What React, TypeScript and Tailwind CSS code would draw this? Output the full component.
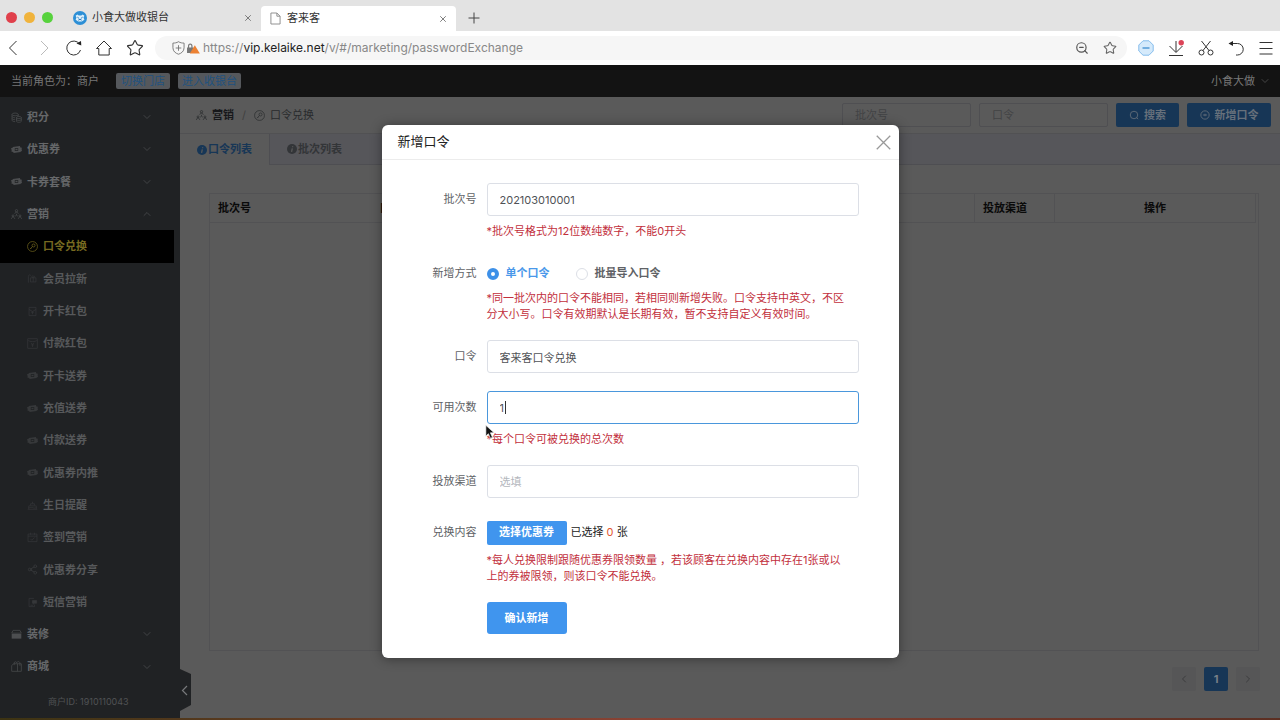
import type { ReactNode } from "react";
import { ChevronDown, ChevronLeft, ChevronRight, ChevronUp, Share2, Star, X, ZoomOut } from "lucide-react";

type IconProps = { className?: string };

function CoinsIcon({ className }: IconProps) {
  return (
    <svg viewBox="0 0 16 16" fill="none" stroke="currentColor" className={className}>
      <ellipse cx="6" cy="3.5" rx="4.5" ry="2" />
      <path d="M1.5 3.5v8.5c0 1 2 2 4.500 2M10.500 3.500V6M1.500 6.500c0 1 2 2 4.500 2M1.500 9.500c0 1 2 1.700 4.500 1.700" />
      <ellipse cx="11.500" cy="8" rx="3.500" ry="1.500" />
      <path d="M8 8v5.500c0 .8 1.500 1.500 3.500 1.500s3.500-.7 3.500-1.500V8M8 10.700c0 .8 1.500 1.500 3.500 1.500s3.500-.7 3.500-1.500" />
    </svg>
  );
}

function TicketIcon({ className }: IconProps) {
  return (
    <svg viewBox="0 0 16 16" fill="currentColor" className={className}>
      <path fillRule="evenodd" d="M0 6l2.500-.5V4.500L13 3l.6 2 2.400.5-.6 1.700.6 3-2 .6v1L4 13l-1-1.500L.5 11l.5-2zM5.500 6.300v4l5-.5v-4z" />
      <path d="M6.500 7.200l3-.3v2l-3 .3z" />
    </svg>
  );
}

function TeamIcon({ className }: IconProps) {
  return (
    <svg viewBox="0 0 16 16" fill="none" stroke="currentColor" className={className}>
      <circle cx="8" cy="2.500" r="1.700" />
      <path d="M5.500 7C5.700 5.500 6.700 4.500 8 4.500s2.300 1 2.500 2.500M8 7v2l-2 1.500M8 9l2 1.500" />
      <circle cx="3" cy="10" r="1.400" />
      <circle cx="13" cy="10" r="1.400" />
      <path d="M.6 14.500c.2-1.800 1.100-2.900 2.400-2.900s2.200 1.100 2.400 2.900M10.600 14.500c.2-1.800 1.100-2.900 2.400-2.900s2.200 1.100 2.400 2.900" />
    </svg>
  );
}

function KeyIcon({ className }: IconProps) {
  return (
    <svg viewBox="0 0 16 16" fill="none" stroke="currentColor" className={className}>
      <circle cx="8" cy="8" r="7.200" />
      <circle cx="9.500" cy="6.500" r="2.200" />
      <path d="M8 8l-3.500 3.500M5.500 10.500l1 1" />
    </svg>
  );
}

function GiftIcon({ className }: IconProps) {
  return (
    <svg viewBox="0 0 16 16" fill="none" stroke="currentColor" className={className}>
      <path d="M2 14V5c0-2 2-3 3.500-1.500M5 7h8v6H5zM9 7v6M9 7c-3-1-2-4 0-2 2-2 3 1 0 2" />
    </svg>
  );
}

function PacketIcon({ className }: IconProps) {
  return (
    <svg viewBox="0 0 16 16" fill="none" stroke="currentColor" className={className}>
      <path d="M3 2h10v12H3zM3 5l5 3 5-3M6 9h4M8 8v4" />
    </svg>
  );
}

function YuanIcon({ className }: IconProps) {
  return (
    <svg viewBox="0 0 16 16" fill="none" stroke="currentColor" className={className}>
      <path d="M1 1h14v14H1zM1 3c3 3 11 3 14 0M6 7l2 2.500L10 7M8 9.500V13M6 10h4" />
    </svg>
  );
}

function CakeIcon({ className }: IconProps) {
  return (
    <svg viewBox="0 0 16 16" fill="none" stroke="currentColor" className={className}>
      <path d="M1 13.500h14M2.500 13V8.500h11V13M5 8V5.500h6V8M8 5V2.500M2.500 11c2 1 3-1 5.500 0s3.500 1 5.500 0" />
    </svg>
  );
}

function CalendarIcon({ className }: IconProps) {
  return (
    <svg viewBox="0 0 16 16" fill="none" stroke="currentColor" className={className}>
      <path d="M1.500 3h13v11h-13zM1.500 6h13M5 1v3M11 1v3M5 10l2 2 4-4" />
    </svg>
  );
}

function SmsIcon({ className }: IconProps) {
  return (
    <svg viewBox="0 0 16 16" fill="none" stroke="currentColor" className={className}>
      <path d="M10 2H3v12h8v-3M5 12h4" />
      <path d="M8 5h6v4h-3l-2 1.500V9H8z" fill="currentColor" />
    </svg>
  );
}

function ShopIcon({ className }: IconProps) {
  return (
    <svg viewBox="0 0 16 16" className={className}>
      <path d="M3 2h10l2 4H1z" fill="none" stroke="currentColor" />
      <path d="M1 7h14v7H1z" fill="currentColor" />
    </svg>
  );
}

function BagIcon({ className }: IconProps) {
  return (
    <svg viewBox="0 0 16 16" fill="none" stroke="currentColor" className={className}>
      <path d="M1 6.500L4 4h11v11H1zM9.500 4v11M4.500 6V3c0-2.500 4-2.500 4 0M9 1.500c2.500-1.500 4 0 4 2V7" />
    </svg>
  );
}

function InfoIcon({ className }: IconProps) {
  return (
    <svg viewBox="0 0 16 16" className={className}>
      <circle cx="8" cy="8" r="8" fill="currentColor" />
      <path d="M9 3.500v1.500M8.500 7L7.300 12.500" stroke="#5a5a5a" strokeWidth="2" />
    </svg>
  );
}

const topMenu = [
  { label: "积分", icon: CoinsIcon, open: false },
  { label: "优惠券", icon: TicketIcon, open: false },
  { label: "卡券套餐", icon: TicketIcon, open: false },
  { label: "营销", icon: TeamIcon, open: true },
];

const subMenu = [
  { label: "口令兑换", icon: KeyIcon, active: true },
  { label: "会员拉新", icon: GiftIcon },
  { label: "开卡红包", icon: PacketIcon },
  { label: "付款红包", icon: YuanIcon },
  { label: "开卡送券", icon: TicketIcon },
  { label: "充值送券", icon: TicketIcon },
  { label: "付款送券", icon: TicketIcon },
  { label: "优惠券内推", icon: TicketIcon },
  { label: "生日提醒", icon: CakeIcon },
  { label: "签到营销", icon: CalendarIcon },
  { label: "优惠券分享", icon: Share2 },
  { label: "短信营销", icon: SmsIcon },
];

const bottomMenu = [
  { label: "装修", icon: ShopIcon, open: false },
  { label: "商城", icon: BagIcon, open: false },
];

function MenuGroup({ items }: { items: typeof topMenu }) {
  return items.map(({ label, icon: Icon, open }) => (
    <button key={label} className="flex flex-1 items-center pl-[11px] pr-[27px] font-bold text-[#66686a]">
      <Icon className="mr-[5px] size-[11px] text-[#4c4e50]" />
      {label}
      {open ? (
        <ChevronUp strokeWidth={1.500} className="ml-auto size-3 text-[#4c4e50]" />
      ) : (
        <ChevronDown strokeWidth={1.500} className="ml-auto size-3 text-[#4c4e50]" />
      )}
    </button>
  ));
}

function BrowserChrome() {
  return (
    <div className="shrink-0 bg-white text-[#333]">
      <div className="flex h-[31px] items-end bg-[#e3e3e3]">
        <div className="flex h-[27px] w-[67px] items-center gap-[7px] pl-[6px]">
          <span className="size-[11px] rounded-full bg-[#e0404b]" />
          <span className="size-[11px] rounded-full bg-[#f0b33c]" />
          <span className="size-[11px] rounded-full bg-[#57d23d]" />
        </div>
        <div className="flex h-[27px] w-[194px] items-center pl-[6px] pr-2">
          <svg viewBox="0 0 16 16" className="mr-[5px] size-[14px]">
            <circle cx="8" cy="8" r="8" fill="#2d8fd6" />
            <path d="M3 5.500L5 4l1.500 1h3L11 4l2 1.500-1 2 1 2.500-3 2H6l-3-2 1-2.500z" fill="#dff1fb" />
            <path d="M5 7l2 1.500M11 7L9 8.500M6 10.500l2-1 2 1M8 9v1" stroke="#1a6fb8" fill="none" />
          </svg>
          <span className="text-[11px]">小食大做收银台</span>
          <X className="ml-auto size-[10px] text-[#666]" />
        </div>
        <div className="flex h-[25px] w-[195px] items-center rounded-t-[4px] bg-white pl-[9px] pr-2">
          <svg viewBox="0 0 12 14" fill="none" stroke="#888" className="mr-[6px] h-[13px] w-[11px]">
            <path d="M1 1h6.500L11 4.500V13H1zM7.500 1v3.500H11" />
          </svg>
          <span className="text-[11px]">客来客</span>
          <X className="ml-auto size-[10px] text-[#666]" />
        </div>
        <svg viewBox="0 0 12 12" stroke="#444" className="mb-[7px] ml-[12px] size-[12px]">
          <path d="M6 .5v11M.5 6h11" />
        </svg>
      </div>
      <div className="flex h-[34px] items-center px-[6px]">
        <div className="flex items-center gap-[14px]">
          <svg viewBox="0 0 16 16" fill="none" stroke="#333" className="size-4">
            <path d="M10.500 1L3.500 8l7 7" />
          </svg>
          <svg viewBox="0 0 16 16" fill="none" stroke="#bbb" className="size-4">
            <path d="M5 1l7 7-7 7" />
          </svg>
          <svg viewBox="0 0 16 16" fill="none" stroke="#333" className="size-4">
            <path d="M13.500 4A7 7 0 1 0 14.500 10" />
            <path d="M10.500 3.500L15 1l.3 4.500z" fill="#222" stroke="none" />
          </svg>
          <svg viewBox="0 0 16 16" fill="none" stroke="#333" className="size-4">
            <path d="M.5 8.500L8 1l7.500 7.500h-2.300V15H2.800V8.500z" />
          </svg>
          <Star strokeWidth={1.500} className="size-[18px] text-[#333]" />
        </div>
        <div className="mx-[11px] flex h-6 flex-1 items-center rounded-full bg-[#f6f6f6] pl-[17px] pr-[10px]">
          <svg viewBox="0 0 14 15" fill="none" stroke="#777" className="h-[14px] w-[13px]">
            <path d="M7 .7c2 1.300 4 1.500 6 1.500v5c0 4-3 6-6 7-3-1-6-3-6-7v-5c2 0 4-.2 6-1.500zM7 4.500v6M4 7.500h6" />
          </svg>
          <svg viewBox="0 0 15 12" className="ml-px mr-[3px] h-[11px] w-[14px]">
            <path d="M1 5h1V3.500C2 1.500 3 .5 4.500.5S7 1.500 7 3.500V5h1v6H1zM3.300 5h2.400V3.500c0-2-2.400-2-2.400 0z" fill="#777" />
            <path d="M9.500 2.500L15 11.500H4z" fill="#ec8133" />
          </svg>
          <span className="text-[12px] text-[#888]">
            https://<span className="text-[#222]">vip.kelaike.net</span>/v/#/marketing/passwordExchange
          </span>
          <ZoomOut strokeWidth={2} className="ml-auto size-[14px] text-[#555]" />
          <Star strokeWidth={1.800} className="ml-[14px] size-[14px] text-[#666]" />
        </div>
        <div className="flex items-center gap-[14px] text-[#333]">
          <svg viewBox="0 0 16 16" className="size-4">
            <path d="M5 .8h6L15.200 5v6L11 15.200H5L.8 11V5z" fill="#d5eafb" stroke="#86bdec" />
            <path d="M4.500 8h7" stroke="#3f8dd0" strokeWidth="1.300" />
          </svg>
          <svg viewBox="0 0 16 16" fill="none" stroke="currentColor" className="size-4">
            <path d="M8 1v11M1.500 6L8 12.500 14.500 6M1 15.500h14" />
            <circle cx="13.200" cy="2.700" r="2.700" fill="#dc4458" stroke="none" />
          </svg>
          <svg viewBox="0 0 16 16" fill="none" stroke="currentColor" className="size-4">
            <path d="M3.500 1l7.500 9.500M12.500 1L5 10.500" />
            <circle cx="3.500" cy="12.500" r="2.500" />
            <circle cx="12.500" cy="12.500" r="2.500" />
          </svg>
          <svg viewBox="0 0 16 16" fill="none" stroke="currentColor" className="size-4">
            <path d="M2 3.500h7.500a5.500 5.500 0 0 1 0 11.500H8" />
            <path d="M.5 3.500L5 1v5z" fill="#222" stroke="none" />
          </svg>
          <svg viewBox="0 0 16 16" stroke="currentColor" className="size-4">
            <path d="M1.500 2.500h13M1.500 8.500h13M1.500 14h13" />
          </svg>
        </div>
      </div>
    </div>
  );
}

function Field({ label, id, children }: { label: string; id?: string; children: ReactNode }) {
  return (
    <div className="flex gap-[10px]">
      <label htmlFor={id} className="flex h-[33px] w-[95px] shrink-0 items-center justify-end text-[#606266]">
        {label}
      </label>
      <div className="min-w-0 flex-1">{children}</div>
    </div>
  );
}

const inputClass =
  "block h-[33px] w-full rounded-[3px] border bg-white px-3 text-[11px] text-[#505256] outline-none placeholder:text-[#b4b7bd]";
const hintClass = "leading-4 text-[#c22f3c]";

function CreateDialog() {
  return (
    <div role="dialog" aria-labelledby="dialog-title" className="w-[517px] rounded-[6px] bg-white shadow-[0_1px_12px_rgba(0,0,0,0.4)]">
      <div className="flex h-[35px] items-center justify-between border-b border-[#ececec] pl-4 pr-2">
        <h2 id="dialog-title" className="text-[13px] text-[#222]">新增口令</h2>
        <button aria-label="关闭">
          <svg viewBox="0 0 16 16" stroke="#999" className="size-[15px]">
            <path d="M.8.8l14.400 14.400M15.200.8L.8 15.200" strokeWidth="1.400" />
          </svg>
        </button>
      </div>
      <form className="flex flex-col gap-[18px] pb-6 pr-10 pt-[23px]">
        <Field label="批次号" id="batch">
          <input id="batch" className={`${inputClass} border-[#dcdfe6]`} defaultValue="202103010001" />
          <p className={`mt-[7px] ${hintClass}`}>*批次号格式为12位数纯数字，不能0开头</p>
        </Field>
        <Field label="新增方式">
          <div className="flex h-[33px] items-center gap-[26px] font-bold">
            <label className="flex items-center gap-[7px] text-[#4a98ea]">
              <input type="radio" name="mode" defaultChecked className="size-3 appearance-none rounded-full border-4 border-[#3d90e8] bg-white" />
              单个口令
            </label>
            <label className="flex items-center gap-[7px] text-[#606266]">
              <input type="radio" name="mode" className="size-3 appearance-none rounded-full border border-[#dcdfe6] bg-white" />
              批量导入口令
            </label>
          </div>
          <p className={hintClass}>
            *同一批次内的口令不能相同，若相同则新增失败。口令支持中英文，不区
            <br />
            分大小写。口令有效期默认是长期有效，暂不支持自定义有效时间。
          </p>
        </Field>
        <Field label="口令" id="word">
          <input id="word" className={`${inputClass} border-[#dcdfe6]`} defaultValue="客来客口令兑换" />
        </Field>
        <Field label="可用次数" id="times">
          <div className="relative">
            <input id="times" className={`${inputClass} border-[#4a97dc]`} defaultValue="1" />
            <span className="absolute left-[18px] top-[10px] h-[13px] w-px bg-[#333]" />
            <svg viewBox="0 0 12 18" className="absolute -left-[2px] top-[33px] z-10 h-[16px] w-[10px]">
              <path d="M1 1v13l3-3 2.500 5.500 2.500-1L6.500 10H11z" fill="#111" stroke="#fff" strokeWidth=".8" />
            </svg>
          </div>
          <p className={`mt-[7px] ${hintClass}`}>*每个口令可被兑换的总次数</p>
        </Field>
        <Field label="投放渠道" id="channel">
          <input id="channel" className={`${inputClass} border-[#dcdfe6]`} placeholder="选填" />
        </Field>
        <Field label="兑换内容">
          <div className="flex h-[33px] items-center gap-1 text-[#222]">
            <button type="button" className="h-6 w-20 rounded-[2px] bg-[#4095ee] font-bold text-white">
              选择优惠券
            </button>
            <span>
              已选择 <span className="text-[#e2562f]">0</span> 张
            </span>
          </div>
          <p className={`mt-[3px] ${hintClass}`}>
            *每人兑换限制跟随优惠券限领数量 ，若该顾客在兑换内容中存在1张或以
            <br />
            上的券被限领，则该口令不能兑换。
          </p>
          <button type="submit" className="mt-[18px] h-8 w-20 rounded-[3px] bg-[#4095ee] font-bold text-white">
            确认新增
          </button>
        </Field>
      </form>
    </div>
  );
}

function Sidebar() {
  return (
    <aside className="relative flex w-[180px] shrink-0 flex-col bg-[#202224]">
      <nav className="flex flex-1 flex-col pt-1">
        <MenuGroup items={topMenu} />
        {subMenu.map(({ label, icon: Icon, active }) => (
          <a
            key={label}
            href="#"
            className={
              active
                ? "mr-[6px] flex flex-1 items-center bg-black pl-[27px] font-bold text-[#776a20]"
                : "mr-[6px] flex flex-1 items-center pl-[27px] font-bold text-[#57595b]"
            }
          >
            <Icon className={active ? "mr-[5px] size-[11px]" : "mr-[5px] size-[11px] text-[#36383a]"} />
            {label}
          </a>
        ))}
        <MenuGroup items={bottomMenu} />
      </nav>
      <p className="h-[35px] pl-12 pt-[11px] text-[9px] leading-4 text-[#505254]">商户ID: 1910110043</p>
      <button aria-label="收起菜单" className="absolute -right-[11px] bottom-[7px] h-[42px] w-[11px] text-[#77797b]">
        <svg viewBox="0 0 11 42" className="h-full w-full">
          <path d="M0 0l11 5v31L0 42z" fill="#202224" />
          <path d="M7 17l-4.500 4.500L7 26" fill="none" stroke="currentColor" strokeWidth="1.200" />
        </svg>
      </button>
    </aside>
  );
}

export default function App() {
  return (
    <div className="flex h-screen flex-col overflow-hidden font-['Inter','Noto_Sans_CJK_SC',sans-serif] text-[11px]">
      <BrowserChrome />
      <div className="relative flex min-h-0 flex-1 flex-col">
        <header className="flex h-8 shrink-0 items-center bg-[#131313] pl-[11px] pr-[9px] text-[#777]">
          <span>当前角色为：商户</span>
          <button className="ml-[17px] h-4 w-[54px] rounded-[2px] bg-[#55585c] leading-4 text-[#22527f]">切换门店</button>
          <button className="ml-2 h-4 w-[63px] rounded-[2px] bg-[#55585c] leading-4 text-[#22527f]">进入收银台</button>
          <button className="ml-auto flex items-center gap-1">
            小食大做
            <ChevronDown strokeWidth={1.500} className="size-3 text-[#555]" />
          </button>
        </header>
        <div className="flex min-h-0 flex-1">
          <Sidebar />
          <main className="flex min-w-0 flex-1 flex-col bg-[#5a5a5a]">
            <div className="flex h-[37px] items-center justify-between border-b border-[#515153] pl-4 pr-[9px]">
              <div className="flex items-center text-[#292b2d]">
                <TeamIcon className="mr-[5px] size-[11px]" />
                <span className="font-bold text-[#17181a]">营销</span>
                <span className="mx-2 text-[#404040]">/</span>
                <KeyIcon className="mr-[5px] size-[11px]" />
                <span>口令兑换</span>
              </div>
              <div className="flex items-center gap-2">
                <input aria-label="批次号" placeholder="批次号" className="h-6 w-[129px] rounded-[2px] border border-[#4f4f52] px-3 outline-none placeholder:text-[#424345]" />
                <input aria-label="口令" placeholder="口令" className="h-6 w-[129px] rounded-[2px] border border-[#4f4f52] px-3 outline-none placeholder:text-[#424345]" />
                <button className="flex h-6 w-[63px] items-center justify-center gap-[5px] rounded-[2px] bg-[#173656] font-bold text-[#66707b]">
                  <svg viewBox="0 0 12 12" fill="none" stroke="currentColor" className="size-[10px]">
                    <circle cx="6" cy="6" r="4.500" />
                    <path d="M9 9l2 2" />
                  </svg>
                  搜索
                </button>
                <button className="flex h-6 w-[84px] items-center justify-center gap-[5px] rounded-[2px] bg-[#173656] font-bold text-[#66707b]">
                  <svg viewBox="0 0 12 12" fill="none" stroke="currentColor" className="size-[10px]">
                    <circle cx="6" cy="6" r="5" />
                    <path d="M3.500 6h5M6 4.500v3" />
                  </svg>
                  新增口令
                </button>
              </div>
            </div>
            <div className="flex h-[31px] bg-[#56565a] font-bold">
              <button className="flex w-[89px] items-center gap-[1px] bg-[#5a5a5a] pl-[17px] text-[#173656]">
                <InfoIcon className="size-[10px]" />
                口令列表
              </button>
              <button className="flex flex-1 items-center gap-[1px] border-b border-l border-[#4e4e52] pl-[17px] text-[#333538]">
                <InfoIcon className="size-[10px]" />
                批次列表
              </button>
            </div>
            <div className="ml-[29px] mr-[21px] mt-7 flex-1 border border-[#525254] pr-[2px]">
              <table className="w-full table-fixed border-collapse text-left text-[#0a0a0a]">
                <thead>
                  <tr className="h-7 border-b border-[#525254]">
                    <th className="w-[162px] pl-2">批次号</th>
                    <th className="border-r border-[#525254] pl-2">口令</th>
                    <th className="w-[80px] border-r border-[#525254] pl-2">投放渠道</th>
                    <th className="w-[201px] border-r border-[#525254] text-center">操作</th>
                  </tr>
                </thead>
              </table>
            </div>
            <div className="mb-[27px] mr-5 mt-4 flex justify-end gap-2 text-[#3c3c3e]">
              <button aria-label="上一页" className="flex h-6 w-6 items-center justify-center rounded-[2px] bg-[#565657]">
                <ChevronLeft className="size-3" />
              </button>
              <button className="h-6 w-6 rounded-[2px] bg-[#173656] font-bold text-[#777f88]">1</button>
              <button aria-label="下一页" className="flex h-6 w-6 items-center justify-center rounded-[2px] bg-[#565657]">
                <ChevronRight className="size-3" />
              </button>
            </div>
          </main>
        </div>
        <div className="absolute inset-0 flex items-center justify-center">
          <CreateDialog />
        </div>
      </div>
      <div className="h-[2px] shrink-0 bg-linear-to-r from-[#3c3312] via-[#8a4234] to-[#5c2f22]" />
    </div>
  );
}
